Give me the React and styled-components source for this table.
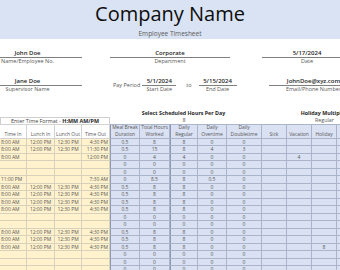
import styled, { createGlobalStyle } from "styled-components";

const TONES = { yellow: "#fff2cc", blue: "#d9e1f2", white: "#ffffff" };
const LINES = { yellow: "#d8d1bb", blue: "#aab4cb", white: "#d2d2d2" };

const COLUMNS = [
  { w: 27, tone: "yellow", align: "left", head: ["Time In"] },
  { w: 28, tone: "yellow", align: "center", head: ["Lunch In"] },
  { w: 27, tone: "yellow", align: "center", head: ["Lunch Out"] },
  { w: 28, tone: "yellow", align: "right", head: ["Time Out"] },
  { w: 30, tone: "blue", align: "center", head: ["Meal Break", "Duration"], edge: true },
  { w: 30, tone: "blue", align: "center", head: ["Total Hours", "Worked"] },
  { w: 28, tone: "blue", align: "center", head: ["Daily", "Regular"], edge: true },
  { w: 29, tone: "blue", align: "center", head: ["Daily", "Overtime"] },
  { w: 35, tone: "blue", align: "center", head: ["Daily", "Doubletime"] },
  { w: 25, tone: "blue", align: "center", head: ["Sick"] },
  { w: 25, tone: "blue", align: "center", head: ["Vacation"] },
  { w: 25, tone: "blue", align: "center", head: ["Holiday"] },
  { w: 40, tone: "blue", align: "center", head: [""] },
];

const TEMPLATE = COLUMNS.map((c) => c.w + "px").join(" ");

const FULL = ["8:00 AM", "12:00 PM", "12:30 PM", "4:30 PM", "0.5", "8", "8", "0", "0", "", "", "", ""];
const EMPTY = ["", "", "", "", "0", "0", "0", "0", "0", "", "", "", ""];

const ROWS = [
  FULL,
  ["8:00 AM", "12:00 PM", "12:30 PM", "11:30 PM", "0.5", "15", "8", "4", "3", "", "", "", ""],
  ["8:00 AM", "", "", "12:00 PM", "0", "4", "4", "0", "0", "", "4", "", ""],
  EMPTY,
  EMPTY,
  ["11:00 PM", "", "", "7:30 AM", "0", "8.5", "8", "0.5", "0", "", "", "", ""],
  FULL,
  FULL,
  FULL,
  FULL,
  EMPTY,
  EMPTY,
  FULL,
  FULL,
  ["8:00 AM", "12:00 PM", "12:30 PM", "4:30 PM", "0.5", "8", "8", "0", "0", "", "", "8", ""],
  EMPTY,
  EMPTY,
  EMPTY,
];

const GlobalStyle = createGlobalStyle`
  body {
    margin: 0;
    overflow: hidden;
    background: #ffffff;
    font-family: "Open Sans", "Liberation Sans", sans-serif;
  }
`;

const Page = styled.div`
  width: 340px;
  height: 270px;
  overflow: hidden;
  background: #ffffff;
`;

const Banner = styled.header`
  height: 39px;
  background: #dae3f3;
  display: flex;
  flex-direction: column;
  align-items: center;
`;

const Title = styled.h1`
  margin: 0;
  padding-top: 2px;
  font-size: 20px;
  line-height: 24px;
  font-weight: 400;
  color: #0d0d0d;
`;

const Subtitle = styled.div`
  margin-top: 3.5px;
  font-size: 6.5px;
  line-height: 8px;
  color: #595959;
`;

const Info = styled.section`
  display: flex;
  flex-direction: column;
  gap: 12.5px;
  padding-top: 11px;
`;

const InfoRow = styled.div`
  display: flex;
  align-items: flex-start;
  width: 380px;
`;

const Field = styled.div`
  width: ${(p) => p.$w}px;
  margin-left: ${(p) => p.$at || 0}px;
  display: flex;
  flex-direction: column;
`;

const Value = styled.div`
  height: 7px;
  border-bottom: 1px solid #7f7f7f;
  font-size: 6px;
  line-height: 7px;
  font-weight: 600;
  color: #262626;
  white-space: nowrap;
  padding-right: ${(p) => p.$pad || 0}px;
  text-align: center;
`;

const Caption = styled.div`
  font-size: 5.5px;
  line-height: 7px;
  color: #595959;
  white-space: nowrap;
  padding-right: ${(p) => p.$pad || 0}px;
  text-align: center;
`;

const Inline = styled.span`
  align-self: center;
  margin-left: ${(p) => p.$at || 0}px;
  margin-top: -1px;
  font-size: 5.5px;
  color: #595959;
  white-space: nowrap;
`;

const Lead = styled.div`
  margin-top: 17px;
  display: grid;
  grid-template-columns: ${TEMPLATE};
  grid-template-rows: 7px 7px;
  width: max-content;
`;

const Note = styled.div`
  grid-column: ${(p) => p.$col} / span ${(p) => p.$span || 1};
  grid-row: ${(p) => p.$row};
  font-size: 5.3px;
  line-height: 7px;
  font-weight: ${(p) => (p.$bold ? 700 : 400)};
  color: ${(p) => (p.$bold ? "#262626" : "#595959")};
  white-space: nowrap;
  display: flex;
  justify-content: center;
`;

const FormatBox = styled.div`
  grid-column: 1 / span 4;
  grid-row: 2;
  border: 1px solid #cfcfcf;
  border-bottom: none;
  font-size: 5.4px;
  line-height: 6px;
  color: #404040;
  text-align: center;
  white-space: nowrap;
  b {
    font-weight: 700;
    color: #262626;
  }
`;

const Sheet = styled.div`
  display: grid;
  grid-template-columns: ${TEMPLATE};
  grid-template-rows: 15px repeat(${ROWS.length}, 7.5px);
  width: max-content;
`;

const HeadCell = styled.div`
  background: ${(p) => (p.$tone === "yellow" ? TONES.white : TONES.blue)};
  border-top: 1px solid ${(p) => (p.$tone === "yellow" ? LINES.white : LINES.blue)};
  border-right: 1px solid ${(p) => (p.$tone === "yellow" ? LINES.white : LINES.blue)};
  border-bottom: 1px solid ${(p) => (p.$tone === "yellow" ? LINES.white : LINES.blue)};
  border-left: ${(p) => (p.$edge ? "1px solid #8e98b0" : "none")};
  display: flex;
  flex-direction: column;
  justify-content: flex-end;
  align-items: center;
  padding-bottom: 0.5px;
  font-size: 5px;
  line-height: 6.5px;
  letter-spacing: -0.05px;
  color: #595959;
  white-space: nowrap;
`;

const DataCell = styled.div`
  background: ${(p) => TONES[p.$tone]};
  border-right: 1px solid ${(p) => LINES[p.$tone]};
  border-bottom: 1px solid ${(p) => LINES[p.$tone]};
  border-left: ${(p) => (p.$edge ? "1px solid #8e98b0" : "none")};
  padding: 0 1px;
  font-size: 5px;
  line-height: 6.5px;
  letter-spacing: -0.05px;
  color: #595959;
  text-align: ${(p) => p.$align};
  white-space: nowrap;
  overflow: hidden;
`;

const App = () => {
  return (
    <Page>
      <GlobalStyle />
      <Banner>
        <Title>Company Name</Title>
        <Subtitle>Employee Timesheet</Subtitle>
      </Banner>

      <Info>
        <InfoRow>
          <Field $w={82}>
            <Value $pad={27}>John Doe</Value>
            <Caption $pad={27}>Name/Employee No.</Caption>
          </Field>
          <Field $w={120} $at={28}>
            <Value>Corporate</Value>
            <Caption>Department</Caption>
          </Field>
          <Field $w={90} $at={32}>
            <Value>5/17/2024</Value>
            <Caption>Date</Caption>
          </Field>
        </InfoRow>
        <InfoRow>
          <Field $w={82}>
            <Value $pad={27}>Jane Doe</Value>
            <Caption $pad={27}>Supervisor Name</Caption>
          </Field>
          <Inline $at={31}>Pay Period</Inline>
          <Field $w={34} $at={2}>
            <Value>5/1/2024</Value>
            <Caption>Start Date</Caption>
          </Field>
          <Inline $at={10}>to</Inline>
          <Field $w={38} $at={7}>
            <Value>5/15/2024</Value>
            <Caption>End Date</Caption>
          </Field>
          <Field $w={90} $at={32}>
            <Value>JohnDoe@xyz.com</Value>
            <Caption>Email/Phone Number</Caption>
          </Field>
        </InfoRow>
      </Info>

      <Lead>
        <Note $col={6} $span={3} $row={1} $bold>
          Select Scheduled Hours Per Day
        </Note>
        <Note $col={12} $row={1} $bold>
          Holiday Multiplier
        </Note>
        <FormatBox>
          Enter Time Format - <b>H:MM AM/PM</b>
        </FormatBox>
        <Note $col={7} $row={2}>8</Note>
        <Note $col={12} $row={2}>Regular</Note>
      </Lead>

      <Sheet>
        {COLUMNS.map((c, i) => (
          <HeadCell key={"h" + i} $tone={c.tone} $edge={c.edge}>
            {c.head.map((line, j) => (
              <span key={j}>{line}</span>
            ))}
          </HeadCell>
        ))}
        {ROWS.map((row, r) =>
          row.map((val, i) => (
            <DataCell key={r + "-" + i} $tone={COLUMNS[i].tone} $align={COLUMNS[i].align} $edge={COLUMNS[i].edge}>
              {val}
            </DataCell>
          ))
        )}
      </Sheet>
    </Page>
  );
};

export default App;
